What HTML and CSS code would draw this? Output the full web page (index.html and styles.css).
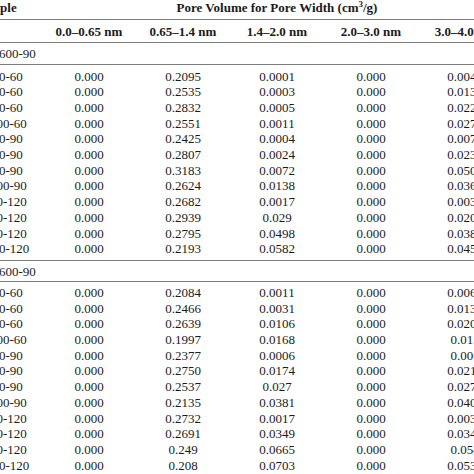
FILE: index.html
```html
<!DOCTYPE html>
<html lang="en">
<head>
<meta charset="utf-8">
<title>Pore Volume Table</title>
<link rel="stylesheet" href="styles.css">
</head>
<body>
<table class="tbl">
  <colgroup>
    <col class="c-s">
    <col class="c-v"><col class="c-v"><col class="c-v"><col class="c-v"><col class="c-v">
  </colgroup>
  <thead>
    <tr class="h1">
      <th class="lab ind-sample">Sample</th>
      <th colspan="5">Pore Volume for Pore Width (cm<sup>3</sup>/g)</th>
    </tr>
    <tr class="h2">
      <th class="lab"></th>
      <th>0.0–0.65 nm</th>
      <th>0.65–1.4 nm</th>
      <th>1.4–2.0 nm</th>
      <th>2.0–3.0 nm</th>
      <th>3.0–4.0 nm</th>
    </tr>
  </thead>
  <tbody class="grp grp-1">
    <tr class="sec"><td class="lab ind-a" colspan="6">600-90</td></tr>
    <tr class="first"><td class="lab ind-a">0-60</td><td>0.000</td><td>0.2095</td><td>0.0001</td><td>0.000</td><td>0.0048</td></tr>
    <tr><td class="lab ind-a">0-60</td><td>0.000</td><td>0.2535</td><td>0.0003</td><td>0.000</td><td>0.0135</td></tr>
    <tr><td class="lab ind-a">0-60</td><td>0.000</td><td>0.2832</td><td>0.0005</td><td>0.000</td><td>0.0226</td></tr>
    <tr><td class="lab ind-b">00-60</td><td>0.000</td><td>0.2551</td><td>0.0011</td><td>0.000</td><td>0.0274</td></tr>
    <tr><td class="lab ind-a">0-90</td><td>0.000</td><td>0.2425</td><td>0.0004</td><td>0.000</td><td>0.0072</td></tr>
    <tr><td class="lab ind-a">0-90</td><td>0.000</td><td>0.2807</td><td>0.0024</td><td>0.000</td><td>0.0233</td></tr>
    <tr><td class="lab ind-a">0-90</td><td>0.000</td><td>0.3183</td><td>0.0072</td><td>0.000</td><td>0.0500</td></tr>
    <tr><td class="lab ind-b">00-90</td><td>0.000</td><td>0.2624</td><td>0.0138</td><td>0.000</td><td>0.0366</td></tr>
    <tr><td class="lab ind-b">0-120</td><td>0.000</td><td>0.2682</td><td>0.0017</td><td>0.000</td><td>0.0033</td></tr>
    <tr><td class="lab ind-b">0-120</td><td>0.000</td><td>0.2939</td><td>0.029</td><td>0.000</td><td>0.0202</td></tr>
    <tr><td class="lab ind-b">0-120</td><td>0.000</td><td>0.2795</td><td>0.0498</td><td>0.000</td><td>0.0388</td></tr>
    <tr class="last"><td class="lab ind-a">0-120</td><td>0.000</td><td>0.2193</td><td>0.0582</td><td>0.000</td><td>0.0455</td></tr>
  </tbody>
  <tbody class="grp grp-2">
    <tr class="sec"><td class="lab ind-a" colspan="6">600-90</td></tr>
    <tr class="first"><td class="lab ind-a">0-60</td><td>0.000</td><td>0.2084</td><td>0.0011</td><td>0.000</td><td>0.0064</td></tr>
    <tr><td class="lab ind-a">0-60</td><td>0.000</td><td>0.2466</td><td>0.0031</td><td>0.000</td><td>0.0133</td></tr>
    <tr><td class="lab ind-a">0-60</td><td>0.000</td><td>0.2639</td><td>0.0106</td><td>0.000</td><td>0.0205</td></tr>
    <tr><td class="lab ind-b">00-60</td><td>0.000</td><td>0.1997</td><td>0.0168</td><td>0.000</td><td>0.015</td></tr>
    <tr><td class="lab ind-a">0-90</td><td>0.000</td><td>0.2377</td><td>0.0006</td><td>0.000</td><td>0.006</td></tr>
    <tr><td class="lab ind-a">0-90</td><td>0.000</td><td>0.2750</td><td>0.0174</td><td>0.000</td><td>0.0212</td></tr>
    <tr><td class="lab ind-a">0-90</td><td>0.000</td><td>0.2537</td><td>0.027</td><td>0.000</td><td>0.0273</td></tr>
    <tr><td class="lab ind-b">00-90</td><td>0.000</td><td>0.2135</td><td>0.0381</td><td>0.000</td><td>0.0402</td></tr>
    <tr><td class="lab ind-b">0-120</td><td>0.000</td><td>0.2732</td><td>0.0017</td><td>0.000</td><td>0.0031</td></tr>
    <tr><td class="lab ind-b">0-120</td><td>0.000</td><td>0.2691</td><td>0.0349</td><td>0.000</td><td>0.0344</td></tr>
    <tr><td class="lab ind-b">0-120</td><td>0.000</td><td>0.249</td><td>0.0665</td><td>0.000</td><td>0.054</td></tr>
    <tr><td class="lab ind-a">0-120</td><td>0.000</td><td>0.208</td><td>0.0703</td><td>0.000</td><td>0.0537</td></tr>
  </tbody>
</table>
</body>
</html>
```

FILE: styles.css
```css
html, body {
  margin: 0;
  padding: 0;
  background: #ffffff;
}

body {
  width: 474px;
  height: 474px;
  overflow: hidden;
  font-family: "Liberation Serif", "Times New Roman", serif;
  font-size: 13px;
  color: #1b1b1b;
}

.tbl {
  border-collapse: separate;
  border-spacing: 0;
  table-layout: fixed;
  width: 512px;
}

.c-s { width: 42px; }
.c-v { width: 94px; }

.tbl th,
.tbl td {
  padding: 0;
  white-space: nowrap;
  text-align: center;
  line-height: 15.7px;
  font-weight: normal;
}

.tbl th {
  font-weight: bold;
}

.tbl .lab {
  text-align: left;
}

.ind-sample { text-indent: -24.5px; }
.ind-a { text-indent: -1px; }
.ind-b { text-indent: -3.5px; }

sup {
  font-size: 9px;
  line-height: 0;
  vertical-align: 5px;
}

.h1 th {
  line-height: 15px;
  padding-bottom: 4px;
  vertical-align: bottom;
  border-bottom: 1px solid #7d7d7d;
}

.h2 th {
  line-height: 15px;
  padding: 3.5px 0;
  border-bottom: 1px solid #7d7d7d;
}

.sec td {
  line-height: 15px;
  padding: 2.75px 0;
  border-bottom: 1px solid #7d7d7d;
}

.grp-1 .first td { padding-top: 4px; }
.grp-2 .first td { padding-top: 2.5px; }

.last td {
  padding-bottom: 3px;
  border-bottom: 1px solid #7d7d7d;
}
```
